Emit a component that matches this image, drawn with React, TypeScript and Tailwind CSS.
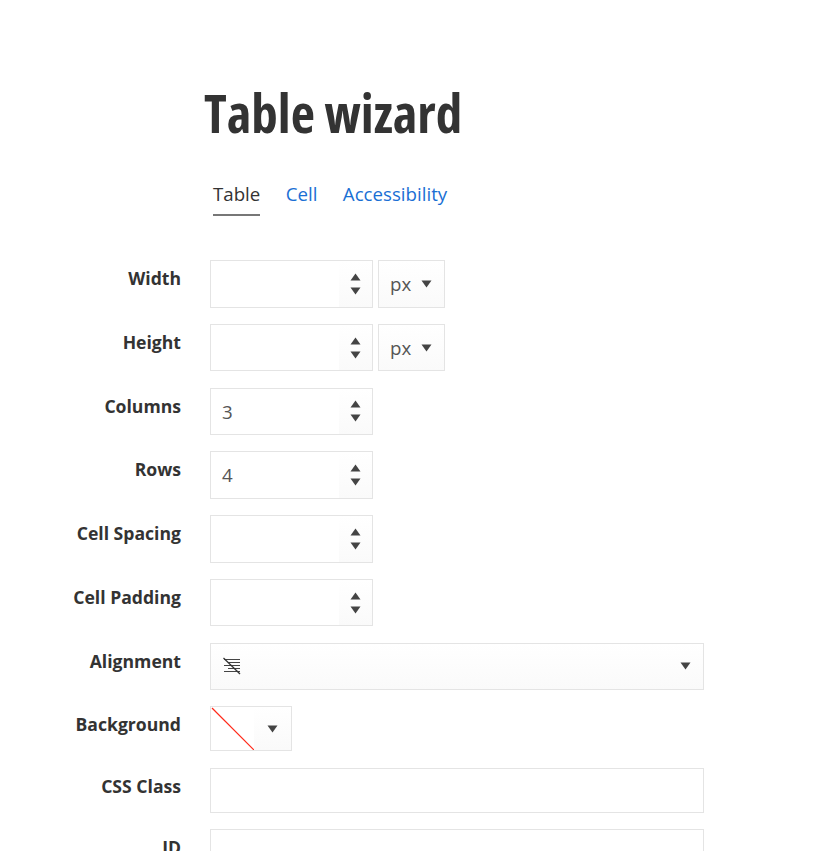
const Tri = ({ up = false }: { up?: boolean }) => (
  <svg width="11" height="8" viewBox="0 0 11 8" className="block">
    <path d={up ? "M5.5 0.5 L10.5 7.5 L0.5 7.5 Z" : "M0.5 0.5 L10.5 0.5 L5.5 7.5 Z"} fill="#444444" />
  </svg>
);

const Label = ({ children }: { children: string }) => (
  <div className="w-[181px] shrink-0 text-right text-[17.6px] leading-[37px] font-bold text-[#333333]">
    {children}
  </div>
);

const NumberBox = ({ value = "" }: { value?: string }) => (
  <div className="flex h-full w-[163px] items-stretch border border-[#e4e4e4] bg-white">
    <div className="flex-1 px-[11px] text-[18.7px] leading-[46px] text-[#555555]">{value}</div>
    <div className="flex w-[33px] flex-col items-center justify-center gap-[6px] bg-gradient-to-b from-white to-[#fafafa] pr-[1px]">
      <Tri up />
      <Tri />
    </div>
  </div>
);

const Unit = () => (
  <div className="flex h-full w-[67px] items-center justify-between border border-[#e4e4e4] bg-gradient-to-b from-white to-[#fafafa] pl-[11px] pr-[12px] text-[18.7px] text-[#555555]">
    <span>px</span>
    <Tri />
  </div>
);

const Row = ({ label, h = "h-[47.5px]", mb = "mb-[16.22px]", unit, children }: { label: string; h?: string; mb?: string; unit?: boolean; children: React.ReactNode }) => (
  <div className={`flex ${h} ${mb}`}>
    <Label>{label}</Label>
    <div className="ml-[29px] flex h-full gap-[5px]">
      {children}
      {unit ? <Unit /> : null}
    </div>
  </div>
);

export default function App() {
  return (
    <div className="h-[851px] w-full overflow-hidden bg-white font-['Open_Sans',sans-serif]">
      <h1 className="ml-[204px] pt-[80px] text-[53px] leading-[65px] font-bold text-[#333333] [font-stretch:75%]">
        Table wizard
      </h1>
      <div className="ml-[213px] mt-[27px] flex gap-[25.4px] text-[18.7px] leading-[26px]">
        <div className="box-content h-[33px] border-b-2 border-[#777777] pt-[9px] text-[#333333]">Table</div>
        <div className="pt-[9px] text-[#1a6fd4]">Cell</div>
        <div className="pt-[9px] text-[#1a6fd4]">Accessibility</div>
      </div>
      <div className="mt-[44.2px]">
        <Row label="Width" unit><NumberBox /></Row>
        <Row label="Height" unit><NumberBox /></Row>
        <Row label="Columns"><NumberBox value="3" /></Row>
        <Row label="Rows"><NumberBox value="4" /></Row>
        <Row label="Cell Spacing"><NumberBox /></Row>
        <Row label="Cell Padding"><NumberBox /></Row>
        <Row label="Alignment">
          <div className="flex h-full w-[494px] items-center justify-between border border-[#e4e4e4] bg-gradient-to-b from-white to-[#fafafa] pl-[12px] pr-[12px]">
            <svg width="18" height="18" viewBox="0 0 18 18" fill="none" className="block">
              <path d="M1 2.5H17M5 5.5H17M1 8.5H17M5 11.5H17M1 14.5H17" stroke="#444444" strokeWidth="1" />
              <path d="M0.5 1L17 17" stroke="#333333" strokeWidth="1.3" />
            </svg>
            <Tri />
          </div>
        </Row>
        <Row label="Background" h="h-[45px]" mb="mb-[17px]">
          <div className="flex h-full w-[82px] border border-[#e4e4e4] bg-white">
            <div className="w-[43px] shrink-0">
              <svg width="43" height="43" viewBox="0 0 43 43" className="block">
                <path d="M1 1L43 43" stroke="#ff2a1a" strokeWidth="1.2" />
              </svg>
            </div>
            <div className="flex flex-1 items-center justify-center bg-gradient-to-b from-white to-[#fafafa] pr-[1px]">
              <Tri />
            </div>
          </div>
        </Row>
        <Row label="CSS Class" h="h-[45px]" mb="mb-4">
          <div className="h-full w-[494px] border border-[#e4e4e4] bg-white" />
        </Row>
        <Row label="ID" h="h-[45px]" mb="mb-4">
          <div className="h-full w-[494px] border border-[#e4e4e4] bg-white" />
        </Row>
      </div>
    </div>
  );
}
